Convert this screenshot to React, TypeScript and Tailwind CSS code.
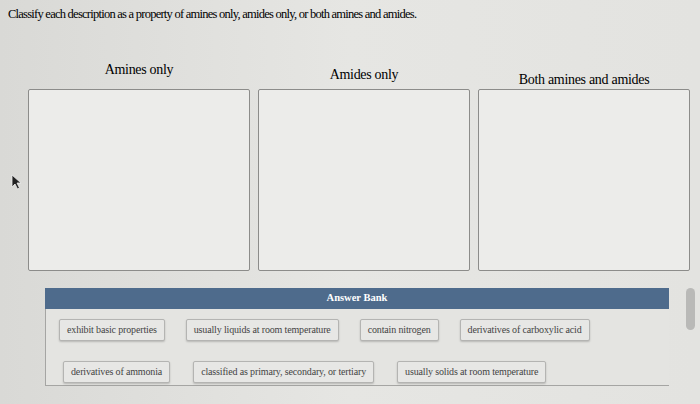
import React from "react";

const serif = { fontFamily: '"Liberation Serif", "Times New Roman", serif' };

const columns = ["Amines only", "Amides only", "Both amines and amides"];

const bankRows = [
  ["exhibit basic properties", "usually liquids at room temperature", "contain nitrogen", "derivatives of carboxylic acid"],
  ["derivatives of ammonia", "classified as primary, secondary, or tertiary", "usually solids at room temperature"],
];

const Chip = ({ label }: { label: string }) => (
  <div className="h-[22px] px-[7px] flex items-center border border-[#b4b4b2] rounded-[2px] bg-[#e7e7e5] shadow-[0_1px_2px_rgba(0,0,0,0.2)] text-[10px] tracking-[-0.15px] text-[#444] whitespace-nowrap">
    {label}
  </div>
);

const App = () => {
  return (
    <div
      style={serif}
      className="relative w-[700px] h-[404px] overflow-hidden bg-gradient-to-r from-[#d9d9d6] via-[#e6e6e3] to-[#e3e3e0] text-black"
    >
      {/* Prompt */}
      <div className="pt-[5px] pl-[8px] text-[12.5px] tracking-[-0.75px] text-black">
        Classify each description as a property of amines only, amides only, or both amines and amides.
      </div>

      {/* Drop targets */}
      <div className="flex gap-[8px] pl-[28px] pr-[10px] mt-[41px]">
        {columns.map((c, i) => (
          <div key={c} className={`flex flex-col ${i === 0 ? "w-[222px]" : "flex-1"}`}>
            <div
              className={`h-[22px] flex items-end justify-center text-[14px] tracking-[-0.3px] ${
                i === 0 ? "pb-[7px]" : i === 1 ? "pb-[2px]" : "pb-[0px] translate-y-[3px]"
              }`}
            >
              {c}
            </div>
            <div className="mt-[2px] h-[182px] border-[1.5px] border-[#8c8c8a] rounded-[2px] bg-[#ececea]" />
          </div>
        ))}
      </div>

      {/* Answer bank */}
      <div className="ml-[45px] mr-[31px] mt-[17px]">
        <div className="h-[21px] bg-[#4e6b8c] flex items-center justify-center text-white text-[10.5px] font-bold">
          Answer Bank
        </div>
        <div className="h-[77px] bg-[#e4e4e1] border-l border-b border-[#a5a5a3] pt-[10px] pl-[13px] flex flex-col gap-[20px]">
          {bankRows.map((row, r) => (
            <div key={r} className={`flex ${r === 0 ? "gap-[21px]" : "gap-[23px] pl-[4px]"}`}>
              {row.map((label) => (
                <Chip key={label} label={label} />
              ))}
            </div>
          ))}
        </div>
      </div>

      {/* scrollbar thumb */}
      <div className="absolute right-[5px] top-[288px] w-[9px] h-[42px] rounded-full bg-[#b9b9b7]" />

      {/* mouse pointer */}
      <svg className="absolute left-[11px] top-[174px]" width="12" height="16" viewBox="0 0 12 16">
        <path d="M1 1 L1 13 L4 10 L6.5 15 L8.5 14 L6 9 L10 9 Z" fill="#222" stroke="#eee" strokeWidth="0.8" />
      </svg>
    </div>
  );
};

export default App;
